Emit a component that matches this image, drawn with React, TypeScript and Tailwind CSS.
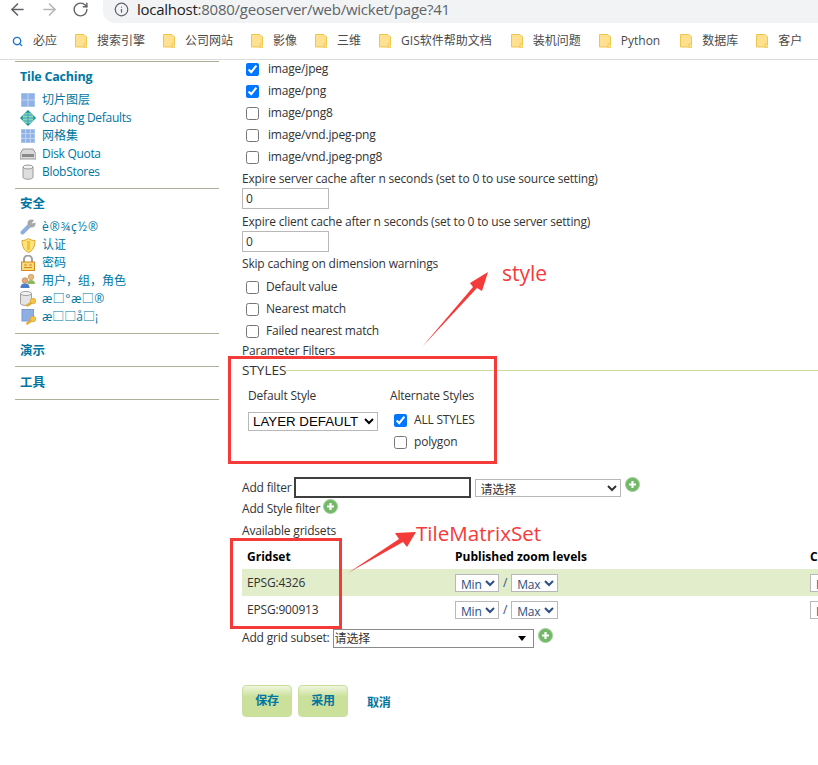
import { ArrowLeft, ArrowRight, RotateCw, Info, Search } from 'lucide-react';

const bookmarks = ['搜索引擎', '公司网站', '影像', '三维', 'GIS软件帮助文档', '装机问题', 'Python', '数据库', '客户'];

function Folder() {
  return (
    <svg width="12" height="14" viewBox="0 0 12 14" className="shrink-0">
      <path d="M.5.5h8.5l2.500 2.500v10h-11z" fill="#fee08f" stroke="#efc64c" />
      <rect x="9" y="10" width="3" height="4" fill="#fee08f" stroke="#efc64c" strokeWidth="0.8" />
    </svg>
  );
}

function GridIcon({ n }: { n: number }) {
  const size = 14 / n;
  const cells = [];
  for (let i = 0; i < n; i++) {
    for (let j = 0; j < n; j++) {
      cells.push(<rect key={`${i}-${j}`} x={i * size + 0.5} y={j * size + 0.5} width={size - 1} height={size - 1} fill="#8eb1e6" />);
    }
  }
  return (
    <svg width="14" height="14" viewBox="0 0 14 14" className="shrink-0 ml-[1px]">
      <rect width="14" height="14" fill="#c3d5f2" />
      {cells}
    </svg>
  );
}

function GlobeIcon() {
  return (
    <svg width="16" height="16" viewBox="0 0 16 16" className="shrink-0">
      <path d="M8 0l8 8-8 8-8-8z" fill="#0a8f96" />
      <circle cx="8" cy="8" r="5.500" fill="#8ed8b0" />
      <path d="M8 2v12M2.500 8h11M4 5h8M4 11h8" stroke="#3b9ec6" strokeWidth="1" />
    </svg>
  );
}

function DiskIcon() {
  return (
    <svg width="16" height="14" viewBox="0 0 16 14" className="shrink-0">
      <path d="M3 2h10l3 5v5H0V7z" fill="#d9d9d9" stroke="#9a9a9a" />
      <rect x="2" y="7" width="12" height="3" fill="#8a8a8a" />
    </svg>
  );
}

function CylinderIcon() {
  return (
    <svg width="16" height="16" viewBox="0 0 16 16" className="shrink-0">
      <path d="M3 3v10c0 3 10 3 10 0V3z" fill="#dedede" stroke="#9a9a9a" />
      <ellipse cx="8" cy="3" rx="5" ry="2" fill="#f2f2f2" stroke="#9a9a9a" />
    </svg>
  );
}

function WrenchIcon() {
  return (
    <svg width="16" height="16" viewBox="0 0 16 16" className="shrink-0">
      <path d="M2.500 13.500L9.500 6.500" stroke="#8eaee0" strokeWidth="4" strokeLinecap="round" />
      <circle cx="11.500" cy="4.500" r="4" fill="#a8a8a8" />
      <path d="M11.500 4.500L15 0l1 3.500z" fill="#ffffff" />
    </svg>
  );
}

function ShieldIcon() {
  return (
    <svg width="15" height="15" viewBox="0 0 15 15" className="shrink-0 ml-[1px]">
      <path d="M7.500.5c2 1.500 4 2 6.500 2 0 6-2 10-6.500 12C3 12.500 1 8.500 1 2.500c2.500 0 4.500-.5 6.500-2z" fill="#fbe27c" stroke="#d9a62c" />
      <path d="M7.500 3v9" stroke="#f4c430" strokeWidth="3" />
    </svg>
  );
}

function LockIcon() {
  return (
    <svg width="14" height="16" viewBox="0 0 14 16" className="shrink-0 ml-[1px]">
      <path d="M3 7V4.500a4 4 0 0 1 8 0V7" fill="none" stroke="#a0a0a0" strokeWidth="2" />
      <rect x="0.500" y="7" width="13" height="8.500" fill="#fbd878" stroke="#d98a1c" />
      <path d="M3 10h3M8 10h3M3 12.500h8" stroke="#c98a2c" />
    </svg>
  );
}

function UsersIcon() {
  return (
    <svg width="16" height="16" viewBox="0 0 16 16" className="shrink-0">
      <circle cx="11" cy="4" r="2.800" fill="#e8b878" stroke="#b08040" strokeWidth="0.5" />
      <path d="M7.500 11c0-3 1.500-4 3.500-4s4 1 4 4z" fill="#8cb860" />
      <circle cx="5" cy="7.500" r="2.800" fill="#e8a878" stroke="#a06030" strokeWidth="0.5" />
      <path d="M.5 15c0-3.500 2-4.500 4.500-4.500s4.500 1 4.500 4.500z" fill="#4a7cc8" />
    </svg>
  );
}

function Key() {
  return (
    <g>
      <path d="M11.500 11.500L6.500 15" stroke="#e8ac2c" strokeWidth="2.500" />
      <circle cx="13" cy="10" r="2.800" fill="#f6c445" stroke="#d09a30" strokeWidth="0.6" />
    </g>
  );
}

function DbKeyIcon() {
  return (
    <svg width="16" height="16" viewBox="0 0 16 16" className="shrink-0">
      <path d="M.5 2.500v10c0 2.500 11 2.500 11 0v-10z" fill="#e4e4e4" stroke="#a0a0a0" />
      <ellipse cx="6" cy="2.500" rx="5.500" ry="2" fill="#f4f4f4" stroke="#a0a0a0" />
      <Key />
    </svg>
  );
}

function SquareKeyIcon() {
  return (
    <svg width="16" height="16" viewBox="0 0 16 16" className="shrink-0">
      <rect x="2" y="0.500" width="11.500" height="11.500" fill="#8eaee6" stroke="#7a9ad4" />
      <Key />
    </svg>
  );
}

function PlusIcon() {
  return (
    <svg width="15" height="15" viewBox="0 0 15 15" className="block shrink-0">
      <circle cx="7.500" cy="7.500" r="7" fill="#72b868" stroke="#9fcf98" />
      <path d="M7.500 4v7M4 7.500h7" stroke="#ffffff" strokeWidth="2.200" />
    </svg>
  );
}

function NavItem({ icon, label, labelClass }: { icon: React.ReactNode; label: string; labelClass?: string }) {
  return (
    <div className="flex h-[18px] items-center">
      <div className="flex w-[22px] shrink-0 items-center">{icon}</div>
      <span className={`text-[12px] text-[#0076a1] ${labelClass || ''}`}>{label}</span>
    </div>
  );
}

function Check({ label, checked, tight }: { label: string; checked?: boolean; tight?: boolean }) {
  return (
    <label className="flex h-[18px] items-center">
      <input type="checkbox" defaultChecked={checked} className="m-0 h-[13px] w-[13px] accent-[#0075ff]" />
      <span className={tight ? 'ml-[7px]' : 'ml-[9px]'}>{label}</span>
    </label>
  );
}

function LevelSelect({ label, width }: { label: string; width: string }) {
  return (
    <select className={`block h-[18px] ${width} border border-[#b8b8b8] bg-white pl-[1px] leading-[16px] text-[#2a4f80]`}>
      <option>{label}</option>
    </select>
  );
}

function LevelSelects() {
  return (
    <div className="flex items-center">
      <LevelSelect label="Min" width="w-[44px]" />
      <span className="mx-[4px] text-[#2a4f80]">/</span>
      <LevelSelect label="Max" width="w-[47px]" />
    </div>
  );
}

export default function App() {
  return (
    <div className="relative h-[765px] w-[818px] overflow-hidden bg-white font-['Open_Sans','Noto_Sans_CJK_SC',sans-serif] text-[12px] text-[#333333]">
      {/* browser toolbar */}
      <div className="flex h-[23px] items-center bg-white">
        <div className="flex w-[103px] shrink-0 items-center pb-[4px] pl-[8px]">
          <ArrowLeft size={19} strokeWidth={2} className="text-[#5f6368]" />
          <ArrowRight size={19} strokeWidth={2} className="ml-[13px] text-[#b4b6b9]" />
          <RotateCw size={17} strokeWidth={2} className="ml-[13px] text-[#5f6368]" />
        </div>
        <div className="flex h-[23px] flex-1 items-center rounded-bl-[12px] bg-[#f1f3f4] pb-[4px] pl-[11px]">
          <Info size={15} strokeWidth={2} className="text-[#5f6368]" />
          <span className="ml-[8px] text-[15px] tracking-[-0.25px] text-[#5f6368]">
            <span className="text-[#202124]">localhost</span>:8080/geoserver/web/wicket/page?41
          </span>
        </div>
      </div>
      <div className="flex h-[37px] items-center overflow-hidden border-b border-[#dcdcdc] pl-[12px] text-[#4a4a4a]">
        <Search size={11} strokeWidth={3} className="shrink-0 text-[#1a73c8]" />
        <span className="ml-[10px] mr-[18px] shrink-0 whitespace-nowrap">必应</span>
        {bookmarks.map((b) => (
          <div key={b} className={`flex shrink-0 items-center gap-[10px] whitespace-nowrap ${b === 'Python' ? 'mr-[20px]' : b.startsWith('GIS') ? 'mr-[19px]' : 'mr-[18px]'}`}>
            <Folder />
            <span>{b}</span>
          </div>
        ))}
      </div>

      <div className="flex">
        {/* sidebar */}
        <aside className="w-[242px] shrink-0 pl-[15px]">
          <div className="mt-[1px] w-[204px] border-t border-[#a9b297] pb-[7px] pl-[5px]">
            <div className="mt-[5px] h-[20px] text-[12.5px] font-bold leading-[20px] tracking-[-0.2px] text-[#0076a1]">Tile Caching</div>
            <div className="mt-[4px]">
              <NavItem icon={<GridIcon n={2} />} label="切片图层" />
              <NavItem icon={<GlobeIcon />} label="Caching Defaults" labelClass="tracking-[-0.3px]" />
              <NavItem icon={<GridIcon n={3} />} label="网格集" />
              <NavItem icon={<DiskIcon />} label="Disk Quota" labelClass="tracking-[-0.3px]" />
              <NavItem icon={<CylinderIcon />} label="BlobStores" labelClass="tracking-[-0.3px]" />
            </div>
          </div>
          <div className="w-[204px] border-t border-[#a9b297] pb-[7px] pl-[5px]">
            <div className="mt-[5px] h-[20px] text-[12.5px] font-bold leading-[20px] text-[#0076a1]">安全</div>
            <div className="mt-[4px]">
              <NavItem icon={<WrenchIcon />} label="è®¾ç½®" labelClass="tracking-[1px]" />
              <NavItem icon={<ShieldIcon />} label="认证" />
              <NavItem icon={<LockIcon />} label="密码" />
              <NavItem icon={<UsersIcon />} label="用户，组，角色" />
              <NavItem icon={<DbKeyIcon />} label="æ□°æ□®" labelClass="tracking-[0.5px]" />
              <NavItem icon={<SquareKeyIcon />} label="æ□□å□¡" />
            </div>
          </div>
          <div className="h-[33px] w-[204px] border-t border-[#a9b297] pl-[5px] pt-[7px] text-[12.5px] font-bold leading-[20px] text-[#0076a1]">演示</div>
          <div className="h-[34px] w-[204px] border-y border-[#a9b297] pl-[5px] pt-[6px] text-[12.5px] font-bold leading-[20px] text-[#0076a1]">工具</div>
        </aside>

        {/* form */}
        <main className="min-w-0 flex-1 leading-[18px] tracking-[-0.19px]">
          <div className="flex flex-col gap-[4px] pl-[4px]">
            <Check label="image/jpeg" checked />
            <Check label="image/png" checked />
            <Check label="image/png8" />
            <Check label="image/vnd.jpeg-png" />
            <Check label="image/vnd.jpeg-png8" />
          </div>
          <div className="mt-[4px] h-[18px] whitespace-nowrap">Expire server cache after n seconds (set to 0 to use source setting)</div>
          <input defaultValue="0" className="block h-[21px] w-[87px] border border-[#b8b8b8] pl-[3px]" />
          <div className="mt-[4px] h-[18px] whitespace-nowrap">Expire client cache after n seconds (set to 0 to use server setting)</div>
          <input defaultValue="0" className="block h-[21px] w-[87px] border border-[#b8b8b8] pl-[3px]" />
          <div className="mt-[3px] h-[18px]">Skip caching on dimension warnings</div>
          <div className="mt-[5px] flex flex-col gap-[4px] pl-[4px]">
            <Check label="Default value" tight />
            <Check label="Nearest match" tight />
            <Check label="Failed nearest match" tight />
          </div>
          <div className="mt-[2px] h-[18px]">Parameter Filters</div>
          <div className="mt-[1px] flex h-[18px] items-center">
            <span className="text-[13.5px] tracking-normal">STYLES</span>
            <div className="h-px flex-1 bg-[#c9da9f]" />
          </div>
          <div className="mt-[8px] flex pl-[6px]">
            <div className="w-[142px]">
              <div className="h-[18px]">Default Style</div>
              <select className="mt-[7px] block h-[19px] w-[130px] border border-[#b8b8b8] bg-white font-['Liberation_Sans',sans-serif] text-[13.300px] tracking-normal text-black">
                <option>LAYER DEFAULT</option>
              </select>
            </div>
            <div>
              <div className="h-[18px]">Alternate Styles</div>
              <div className="mt-[6px] flex flex-col gap-[4px] pl-[4px]">
                <Check label="ALL STYLES" checked tight />
                <Check label="polygon" tight />
              </div>
            </div>
          </div>
          <div className="mt-[26px] flex h-[22px] items-start">
            <span className="mt-[2px]">Add filter</span>
            <input className="ml-[2px] h-[21px] w-[177px] border-2 border-[#3f3f3f]" />
            <select className="ml-[4px] mt-[2px] h-[18px] w-[146px] border border-[#b8b8b8] bg-white pl-[1px] leading-[16px] text-[#333333]">
              <option>请选择</option>
            </select>
            <span className="ml-[4px]"><PlusIcon /></span>
          </div>
          <div className="mt-[1px] flex h-[20px] items-start">
            <span>Add Style filter</span>
            <span className="ml-[3px] mt-[-1px]"><PlusIcon /></span>
          </div>
          <div className="mt-[2px] h-[18px]">Available gridsets</div>
          <table className="mt-[3px] w-[640px] table-fixed border-collapse">
            <thead>
              <tr className="h-[26px] text-left">
                <th className="w-[213px] pl-[5px] pt-[2px] font-bold tracking-normal text-black">Gridset</th>
                <th className="w-[355px] pt-[2px] font-bold tracking-normal text-black">Published zoom levels</th>
                <th className="pt-[2px] font-bold tracking-normal text-black">C</th>
              </tr>
            </thead>
            <tbody>
              <tr className="h-[27px] bg-[#e1edcb]">
                <td className="pl-[5px]">EPSG:4326</td>
                <td><LevelSelects /></td>
                <td><LevelSelect label="Min" width="w-[44px]" /></td>
              </tr>
              <tr className="h-[27px]">
                <td className="pl-[5px]">EPSG:900913</td>
                <td><LevelSelects /></td>
                <td><LevelSelect label="Min" width="w-[44px]" /></td>
              </tr>
            </tbody>
          </table>
          <div className="mt-[6px] flex h-[20px] items-start">
            <span>Add grid subset:</span>
            <div className="relative ml-[3px] h-[19px] w-[201px]">
              <select className="block h-[19px] w-full appearance-none border border-[#8a8a8a] bg-white pl-[1px] leading-[17px] text-[#333333]">
                <option>请选择</option>
              </select>
              <svg width="8" height="5" viewBox="0 0 8 5" className="absolute right-[8px] top-[7px]">
                <path d="M0 0h8L4 5z" fill="#000000" />
              </svg>
            </div>
            <span className="ml-[4px] mt-[-1px]"><PlusIcon /></span>
          </div>
          <div className="mt-[36px] flex items-center">
            <button className="h-[32px] w-[50px] rounded-[4px] border border-[#c9dd9e] bg-[linear-gradient(#eef6de,#cbe19b_35%)] text-[12px] font-bold text-[#0076a1]">保存</button>
            <button className="ml-[6px] h-[32px] w-[50px] rounded-[4px] border border-[#c9dd9e] bg-[linear-gradient(#eef6de,#cbe19b_35%)] text-[12px] font-bold text-[#0076a1]">采用</button>
            <span className="ml-[19px] pt-[3px] font-bold text-[#0076a1]">取消</span>
          </div>
        </main>
      </div>

      {/* annotations drawn over the screenshot */}
      <div className="absolute left-[228px] top-[356px] h-[108px] w-[269px] border-[3px] border-[#f53a3a]" />
      <div className="absolute left-[230px] top-[538px] h-[91px] w-[112px] border-[3px] border-[#f53a3a]" />
      <svg width="818" height="765" className="pointer-events-none absolute left-0 top-0">
        <polygon points="422,347 473,287 470,283 488,272 482,291 477,288" fill="#f53a3a" />
        <polygon points="348,573 399,539 395,533 416,532 407,547 403,542" fill="#f53a3a" />
      </svg>
      <span className="absolute left-[502px] top-[259px] text-[21px] leading-[28px] text-[#f53a3a]">style</span>
      <span className="absolute left-[416px] top-[519px] text-[20.600px] leading-[28px] text-[#f53a3a]">TileMatrixSet</span>
    </div>
  );
}
